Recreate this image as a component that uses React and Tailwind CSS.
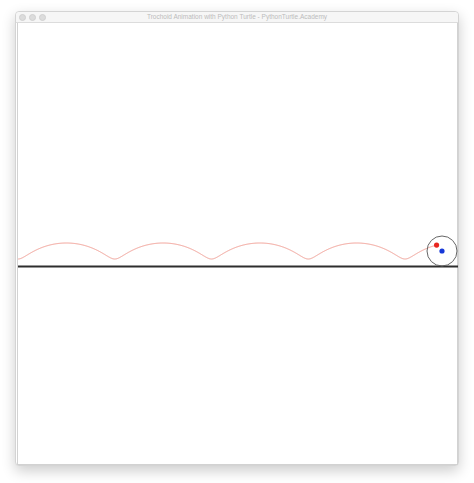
import React from 'react';

// wheel geometry, in canvas pixels
const R = 15.4;
const PEN = 8;
const CY = 228;
const END_X = 424;

function trochoidPath() {
  const thetaMax = END_X / R;
  const pts = [];
  for (let t = 0; t <= thetaMax; t += 0.02) {
    pts.push([R * t - PEN * Math.sin(t), CY + PEN * Math.cos(t)]);
  }
  pts.push([END_X - PEN * Math.sin(thetaMax), CY + PEN * Math.cos(thetaMax)]);
  return pts.map(([x, y], i) => `${i ? 'L' : 'M'}${x.toFixed(2)} ${y.toFixed(2)}`).join(' ');
}

function penPoint() {
  const t = END_X / R;
  return [END_X - PEN * Math.sin(t), CY + PEN * Math.cos(t)];
}

function TitleBar() {
  return (
    <div className="relative flex h-[12px] items-center border-b border-[#dcdcdc] bg-[#f6f6f6] rounded-t-[4px]">
      <div className="absolute left-[3px] top-[2px] flex gap-[3px]">
        <span className="h-[7px] w-[7px] rounded-full bg-[#dcdcdc] border border-[#d0d0d0]" />
        <span className="h-[7px] w-[7px] rounded-full bg-[#dcdcdc] border border-[#d0d0d0]" />
        <span className="h-[7px] w-[7px] rounded-full bg-[#dcdcdc] border border-[#d0d0d0]" />
      </div>
      <div className="flex-1 text-center text-[6.5px] leading-none text-[#bcbcbc] font-['Liberation_Sans',sans-serif]">
        Trochoid Animation with Python Turtle - PythonTurtle.Academy
      </div>
    </div>
  );
}

function Canvas() {
  const [px, py] = penPoint();
  return (
    <svg width="440" height="441" viewBox="0 0 440 441" className="block">
      <path d={trochoidPath()} fill="none" stroke="#f29a90" strokeWidth="1" />
      <line x1="0" y1="243.5" x2="440" y2="243.5" stroke="#2e2e2e" strokeWidth="2" />
      <circle cx={END_X} cy={CY} r="15" fill="none" stroke="#666" strokeWidth="1" />
      <circle cx={px} cy={py} r="2.6" fill="#e8261e" />
      <circle cx={END_X} cy={CY} r="2.6" fill="#1638d8" />
    </svg>
  );
}

export default function App() {
  return (
    <div className="h-[483px] w-[474px] bg-white pl-[15px] pt-[11px]">
      <div className="flex h-[455px] w-[444px] flex-col rounded-[4px] border border-[#d4d4d4] bg-white shadow-[0_5px_14px_rgba(0,0,0,0.2)]">
        <TitleBar />
        <div className="flex flex-1 justify-center">
          <div className="h-[442px] w-[441px] border-l border-r border-b border-[#d2d2d2]">
            <Canvas />
          </div>
        </div>
      </div>
    </div>
  );
}
